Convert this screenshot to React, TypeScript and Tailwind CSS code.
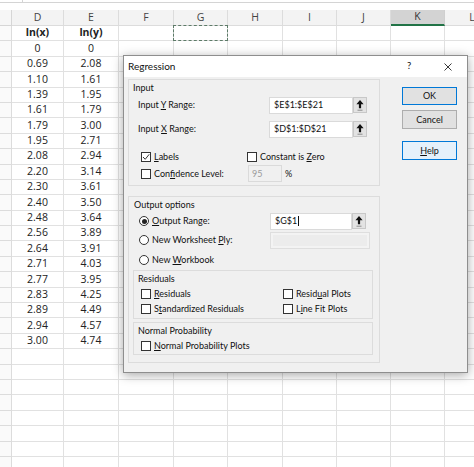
import React from "react";

const lnx = ["0", "0.69", "1.10", "1.39", "1.61", "1.79", "1.95", "2.08", "2.20", "2.30", "2.40", "2.48", "2.56", "2.64", "2.71", "2.77", "2.83", "2.89", "2.94", "3.00"];
const lny = ["0", "2.08", "1.61", "1.95", "1.79", "3.00", "2.71", "2.94", "3.14", "3.61", "3.50", "3.64", "3.89", "3.91", "4.03", "3.95", "4.25", "4.49", "4.57", "4.74"];
const letters = ["D", "E", "F", "G", "H", "I", "J", "K", "L"];

function Acc({ pre = "", k, post = "" }: { pre?: string; k: string; post?: string }) {
  return (
    <span className="whitespace-nowrap">
      {pre}
      <span className="underline underline-offset-1">{k}</span>
      {post}
    </span>
  );
}

function Checkbox({ checked = false }: { checked?: boolean }) {
  return (
    <span className="mr-[3px] flex h-[10px] w-[10px] shrink-0 items-center justify-center border border-[#333] bg-white">
      {checked && (
        <svg width="8" height="8" viewBox="0 0 8 8">
          <polyline points="1,4 3.2,6.3 7.2,1.3" fill="none" stroke="#333" strokeWidth="1" />
        </svg>
      )}
    </span>
  );
}

function Radio({ checked = false }: { checked?: boolean }) {
  return (
    <span className="mr-[3px] flex h-[10px] w-[10px] shrink-0 items-center justify-center rounded-full border border-[#333] bg-white">
      {checked && <span className="h-[5px] w-[5px] rounded-full bg-[#222]" />}
    </span>
  );
}

function RefButton() {
  return (
    <span className="flex h-[16px] w-[14px] shrink-0 items-center justify-center border border-[#c8c8c8] bg-[#e3e3e3]">
      <svg width="8" height="11" viewBox="0 0 8 11">
        <polygon points="4,0 7.6,4.2 5.1,4.2 5.1,8.2 2.9,8.2 2.9,4.2 0.4,4.2" fill="#111" />
        <line x1="1.5" y1="10.2" x2="6.5" y2="10.2" stroke="#777" strokeWidth="0.8" />
      </svg>
    </span>
  );
}

function RangeBox({ value, width }: { value: string; width: string }) {
  return (
    <span className="flex items-center">
      <span className={`flex h-[17px] ${width} items-center border border-[#dadada] bg-white pl-[4px] text-[9px]`}>
        {value}
      </span>
      <RefButton />
    </span>
  );
}

function Sheet() {
  const rows = Array.from({ length: 30 }, (_, i) => i);
  return (
    <div className="flex flex-col font-['Open_Sans',sans-serif]">
      <div className="relative h-[3px] border-b border-[#d4d4d4] bg-white">
        <div className="ml-[22px] h-full w-px bg-[#d4d4d4]" />
      </div>
      <div className="h-[7px] bg-white" />
      <div className="grid grid-cols-[12px_52px_55px_55px_54px_55px_54px_54px_54px_55px]">
        <div className="h-[16px] border-r border-b border-[#d6d6d6] bg-[#f6f6f6]" />
        {letters.map((l) => (
          <div
            key={l}
            className={
              l === "K"
                ? "flex h-[16px] items-center justify-center border-r border-b-2 border-r-[#cfcfcf] border-b-[#217346] bg-[#d3d3d3] text-[10.5px] text-[#333]"
                : "flex h-[16px] items-center justify-center border-r border-b border-[#dcdcdc] bg-[#f3f3f3] text-[10.5px] text-[#444]"
            }
          >
            {l}
          </div>
        ))}
        {rows.map((r) => (
          <React.Fragment key={r}>
            <div className="h-[15.4px] border-r border-b border-[#dcdcdc] bg-[#fafafa]" />
            {letters.map((l, c) => {
              let text = "";
              if (c === 0) text = r === 0 ? "ln(x)" : lnx[r - 1] ?? "";
              if (c === 1) text = r === 0 ? "ln(y)" : lny[r - 1] ?? "";
              const marquee = r === 0 && l === "G";
              return (
                <div
                  key={l}
                  className={`relative flex h-[15.4px] items-center justify-center border-r border-b border-[#e1e1e1] text-[10.5px] text-[#222] ${r === 0 ? "font-bold" : ""}`}
                >
                  {text}
                  {marquee && (
                    <div className="absolute -left-px -top-px h-[16px] w-[55px] border border-dashed border-[#5d7b68]" />
                  )}
                </div>
              );
            })}
          </React.Fragment>
        ))}
      </div>
    </div>
  );
}

function Dialog() {
  return (
    <div className="absolute left-[123px] top-[55px] flex h-[318px] w-[345px] flex-col border border-[#8e8e8e] bg-[#f0f0f0] font-['Lato',sans-serif] text-[9px] text-[#111] shadow-[0_2px_10px_rgba(0,0,0,0.35)]">
      <div className="relative flex h-[21px] items-center bg-white pl-[4px] text-[10px]">
        Regression
        <span className="absolute left-[283px] text-[9.5px]">?</span>
        <svg className="absolute left-[320px]" width="8" height="8" viewBox="0 0 8 8">
          <path d="M0.5 0.5 L7.5 7.5 M7.5 0.5 L0.5 7.5" stroke="#222" strokeWidth="0.9" />
        </svg>
      </div>
      <div className="flex pl-[4px] pt-[2px]">
        <div className="flex w-[252px] flex-col">
          {/* Input */}
          <div className="flex h-[107px] flex-col border border-[#dcdcdc]">
            <div className="flex h-[15px] items-center pl-[4px]">Input</div>
            <div className="mt-[1px] flex h-[18px] items-center pl-[9px]">
              <span className="w-[131px]">
                <Acc pre="Input " k="Y" post=" Range:" />
              </span>
              <RangeBox value="$E$1:$E$21" width="w-[84px]" />
            </div>
            <div className="mt-[6px] flex h-[18px] items-center pl-[9px]">
              <span className="w-[131px]">
                <Acc pre="Input " k="X" post=" Range:" />
              </span>
              <RangeBox value="$D$1:$D$21" width="w-[84px]" />
            </div>
            <div className="mt-[11px] flex h-[16px] items-center pl-[12px]">
              <span className="flex w-[106px] items-center">
                <Checkbox checked />
                <Acc k="L" post="abels" />
              </span>
              <span className="flex items-center">
                <Checkbox />
                <Acc pre="Constant is " k="Z" post="ero" />
              </span>
            </div>
            <div className="flex h-[17px] items-center pl-[12px]">
              <span className="flex w-[107px] items-center">
                <Checkbox />
                <Acc pre="Con" k="f" post="idence Level:" />
              </span>
              <span className="flex h-[17px] w-[34px] items-center border border-[#dadada] bg-[#f0f0f0] pl-[3px] text-[9px] text-[#9a9a9a]">
                95
              </span>
              <span className="ml-[3px] text-[9px]">%</span>
            </div>
          </div>
          {/* Output */}
          <div className="mt-[10px] flex h-[167px] flex-col border border-[#dcdcdc]">
            <div className="flex h-[15px] items-center pl-[5px]">Output options</div>
            <div className="flex h-[18px] items-center pl-[10px]">
              <span className="flex w-[131px] items-center">
                <Radio checked />
                <Acc k="O" post="utput Range:" />
              </span>
              <span className="flex items-center">
                <span className="flex h-[17px] w-[82px] items-center border border-[#dadada] bg-white pl-[4px] text-[9px]">
                  $G$1<span className="ml-px h-[10px] w-px bg-[#111]" />
                </span>
                <RefButton />
              </span>
            </div>
            <div className="mt-[1px] flex h-[18px] items-center pl-[10px]">
              <span className="flex w-[131px] items-center">
                <Radio />
                <Acc pre="New Worksheet " k="P" post="ly:" />
              </span>
              <span className="h-[17px] w-[100px] border border-[#dedede] bg-[#f3f3f3] p-[2px]">
                <span className="block h-full w-full bg-[#ececec]" />
              </span>
            </div>
            <div className="mt-[3px] flex h-[16px] items-center pl-[10px]">
              <Radio />
              <Acc pre="New " k="W" post="orkbook" />
            </div>
            <div className="ml-[4px] mt-[2px] flex h-[49px] w-[240px] flex-col border border-[#dcdcdc]">
              <div className="flex h-[15px] items-center pl-[4px]">Residuals</div>
              <div className="flex h-[15px] items-center pl-[7px]">
                <span className="flex w-[142px] items-center">
                  <Checkbox />
                  <Acc k="R" post="esiduals" />
                </span>
                <span className="flex items-center">
                  <Checkbox />
                  <Acc pre="Resid" k="u" post="al Plots" />
                </span>
              </div>
              <div className="flex h-[15px] items-center pl-[7px]">
                <span className="flex w-[142px] items-center">
                  <Checkbox />
                  <Acc pre="S" k="t" post="andardized Residuals" />
                </span>
                <span className="flex items-center">
                  <Checkbox />
                  <Acc pre="L" k="i" post="ne Fit Plots" />
                </span>
              </div>
            </div>
            <div className="ml-[4px] mt-[3px] flex h-[33px] w-[240px] flex-col border border-[#dcdcdc]">
              <div className="flex h-[15px] items-center pl-[4px]">Normal Probability</div>
              <div className="flex h-[15px] items-center pl-[7px]">
                <Checkbox />
                <Acc k="N" post="ormal Probability Plots" />
              </div>
            </div>
          </div>
        </div>
        <div className="ml-[22px] flex w-[55px] flex-col pt-[8px]">
          <button className="flex h-[18px] items-center justify-center border border-[#0078d7] bg-[#e1e1e1]">
            OK
          </button>
          <button className="mt-[5px] flex h-[19px] items-center justify-center border border-[#adadad] bg-[#e1e1e1]">
            Cancel
          </button>
          <button className="mt-[12px] flex h-[19px] items-center justify-center border border-[#0078d7] bg-[#e5f1fb]">
            <Acc k="H" post="elp" />
          </button>
        </div>
      </div>
    </div>
  );
}

export default function App() {
  return (
    <div className="relative h-[467px] w-[474px] overflow-hidden bg-white">
      <Sheet />
      <Dialog />
    </div>
  );
}
